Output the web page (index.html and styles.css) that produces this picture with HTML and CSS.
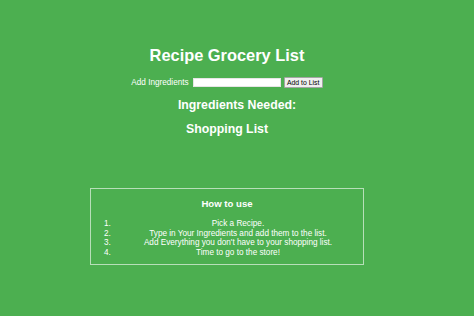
FILE: index.html
```html
<!DOCTYPE html>
<html lang="en">
<head>
    <meta charset="UTF-8">
    <meta name="viewport" content="width=device-width, initial-scale=1.0">
    <title>Recipe Grocery List</title>
    <link rel="stylesheet" href="styles.css">
</head>
<body>
    <div class="page">
        <h1>Recipe Grocery List</h1>
        <form class="add-form">
            <label for="ingredient">Add Ingredients</label>
            <input type="text" id="ingredient">
            <button type="submit">Add to List</button>
        </form>
        <h2 class="needed">Ingredients Needed:</h2>
        <h2 class="shopping">Shopping List</h2>
        <div class="how-to">
            <h3>How to use</h3>
            <ol>
                <li>Pick a Recipe.</li>
                <li>Type in Your Ingredients and add them to the list.</li>
                <li>Add Everything you don't have to your shopping list.</li>
                <li>Time to go to the store!</li>
            </ol>
        </div>
    </div>
</body>
</html>
```

FILE: styles.css
```css
body {
    margin: 0;
    padding: 0;
    background-color: #4caf50;
    color: #fff;
    font-family: "Liberation Sans", Arial, sans-serif;
}
.page {
    width: 454px;
    text-align: center;
}
h1 {
    font-size: 16.4px;
    line-height: 19px;
    margin: 46px 0 0;
}
.add-form {
    display: flex;
    justify-content: center;
    align-items: center;
    margin-top: 12px;
    height: 11px;
    font-size: 8.2px;
}
.add-form label {
    line-height: 9px;
    margin-bottom: 1px;
}
.add-form input {
    box-sizing: border-box;
    width: 88px;
    height: 9px;
    margin: 0 3px 0 4px;
    padding: 0;
    border: 1px solid #e6e6e6;
    background: #fff;
}
.add-form button {
    box-sizing: border-box;
    width: 39px;
    height: 11px;
    padding: 0;
    font-family: "Liberation Sans", Arial, sans-serif;
    font-size: 6.85px;
    line-height: 9px;
    color: #000;
    background: #efefef;
    border: 1px solid #a5a5a5;
    border-radius: 1px;
}
h2 {
    font-size: 12.3px;
    line-height: 14px;
    margin: 0;
}
.needed {
    margin-top: 10px;
    padding-left: 20px;
}
.shopping {
    margin-top: 10px;
}
.how-to {
    width: 272px;
    margin: 52px auto 0;
    padding: 9px 0 7px;
    border: 1px solid rgba(255, 255, 255, 0.6);
}
.how-to h3 {
    font-size: 9.6px;
    line-height: 11px;
    margin: 0;
}
.how-to ol {
    margin: 10px 0 0;
    padding-left: 22px;
    font-size: 8.2px;
    line-height: 9.6px;
}
```
